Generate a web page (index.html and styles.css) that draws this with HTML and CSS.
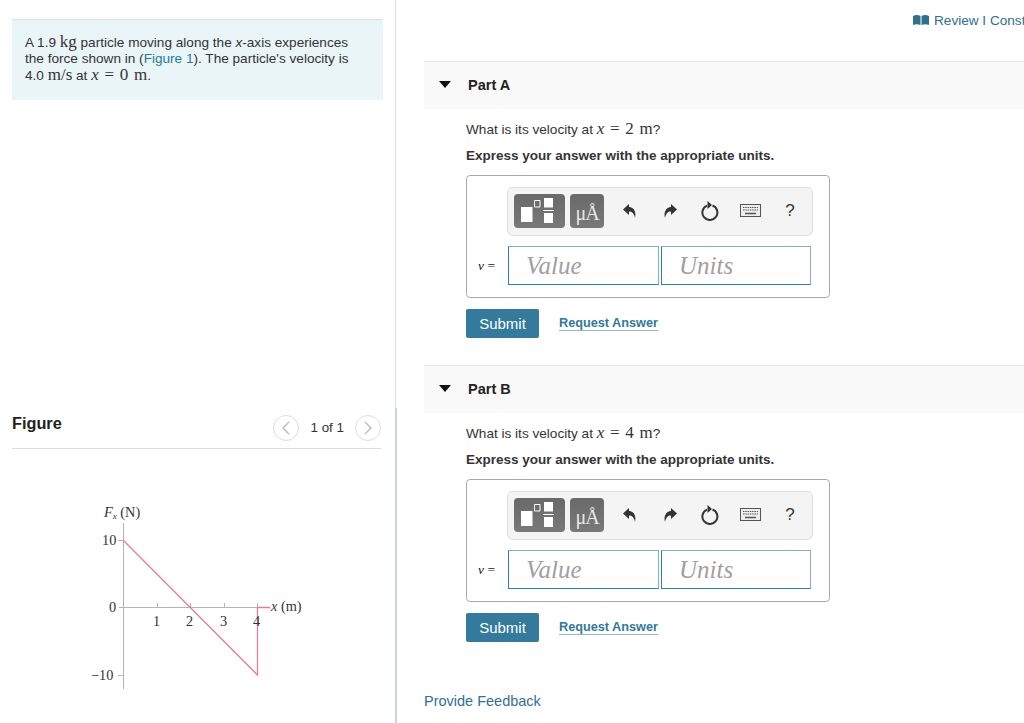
FILE: index.html
```html
<!DOCTYPE html>
<html lang="en">
<head>
<meta charset="utf-8">
<title>Particle problem</title>
<link rel="stylesheet" href="styles.css">
</head>
<body>
<div class="page">
  <aside class="left">
    <div class="problem">A 1.9 <span class="m">kg</span> particle moving along the <i>x</i>-axis experiences the force shown in (<a href="#">Figure 1</a>). The particle's velocity is 4.0 <span class="m">m/s</span> at <span class="m"><i>x</i> = 0 m</span>.</div>
    <section class="figure">
      <div class="figure-head">
        <h2>Figure</h2>
        <div class="pager">
          <span class="circle"><svg width="8" height="14" viewBox="0 0 8 14"><path d="M7 1 1 7l6 6" fill="none" stroke="#bbb" stroke-width="1.4"/></svg></span>
          <span class="count">1 of 1</span>
          <span class="circle"><svg width="8" height="14" viewBox="0 0 8 14"><path d="M1 1l6 6-6 6" fill="none" stroke="#bbb" stroke-width="1.4"/></svg></span>
        </div>
      </div>
      <svg class="graph" width="369" height="240" viewBox="12 449 369 240">
        <g stroke="#b4b4b4" stroke-width="1" fill="none">
          <path d="M123.5 523V689"/>
          <path d="M119 607.500H270"/>
          <path d="M118 540.500H123M118 675.500H123M157.500 603V607M190.500 603V607M224.500 603V607M257.500 603V607"/>
        </g>
        <path d="M123 540 257.500 675V607.500H270" fill="none" stroke="#ea7d99" stroke-width="1.300"/>
        <g class="gt">
          <text x="104" y="517"><tspan font-style="italic">F</tspan><tspan font-style="italic" font-size="9" dy="2">x</tspan><tspan dy="-2"> (N)</tspan></text>
          <text x="102" y="545">10</text>
          <text x="109" y="612">0</text>
          <text x="91" y="680">−10</text>
          <text x="153" y="626">1</text>
          <text x="186" y="626">2</text>
          <text x="220" y="626">3</text>
          <text x="253" y="626">4</text>
          <text x="271" y="611"><tspan font-style="italic">x</tspan> (m)</text>
        </g>
      </svg>
    </section>
  </aside>
  <main class="right">
    <div class="top-link">
      <svg width="16" height="10" viewBox="0 0 16 10"><path d="M0 1q4-2 7.500 0v9Q4 8.500 0 10zM8.500 1q3.500-2 7.500 0v9q-4-1.500-7.500 0z" fill="#2f6f8f"/></svg>
      <a href="#">Review I Constants</a>
    </div>
    <section class="part">
      <div class="part-head"><svg width="12" height="7" viewBox="0 0 12 7"><path d="M0 0h12L6 7z" fill="#111"/></svg><b>Part A</b></div>
      <div class="part-body">
        <p class="q">What is its velocity at <span class="m"><i>x</i> = 2 m</span>?</p>
        <p class="e">Express your answer with the appropriate units.</p>
        <div class="answer">
          <div class="toolbar">
            <span class="tbtn wide">
              <svg width="34" height="26" viewBox="0 0 34 26"><path d="M0 9h11.500v15H0zM23 0h9v9.500h-9zM23 15h9v10h-9z" fill="#fff"/><path d="M13.500 2.500h5.500v6.500h-5.500z" fill="none" stroke="#fff"/><path d="M22 12.500h11" stroke="#fff"/></svg>
            </span>
            <span class="tbtn narrow">μÅ</span>
            <span class="ic first"><svg width="16" height="16" viewBox="0 0 16 16"><path d="M7 1 1 6.500 7 12V8.500c3 0 5 1.500 6 6.500 1.500-6-1-10.500-6-11z" fill="#333"/></svg></span>
            <span class="ic"><svg width="16" height="16" viewBox="0 0 16 16"><path d="M9 1l6 5.500L9 12V8.500c-3 0-5 1.500-6 6.500-1.500-6 1-10.500 6-11z" fill="#333"/></svg></span>
            <span class="ic"><svg width="18" height="20" viewBox="0 0 18 20"><path d="M6 4.600a7.500 7.500 0 1 0 5.500-.1" fill="none" stroke="#333" stroke-width="2"/><path d="M6.500 0v8L11 4z" fill="#333"/></svg></span>
            <span class="ic"><svg width="21" height="13" viewBox="0 0 21 13"><rect x=".5" y=".5" width="20" height="12" fill="#eee" stroke="#555"/><path d="M3 3.500h15M3 6h15" stroke="#555" stroke-dasharray="1.500 .8"/><path d="M5 9.500h11" stroke="#555" stroke-width="1.500"/></svg></span>
            <span class="ic help">?</span>
          </div>
          <div class="inputs">
            <span class="lab"><i>v</i> =</span>
            <span class="inp">Value</span>
            <span class="inp">Units</span>
          </div>
        </div>
        <div class="actions"><button>Submit</button><a href="#">Request Answer</a></div>
      </div>
    </section>
    <section class="part">
      <div class="part-head"><svg width="12" height="7" viewBox="0 0 12 7"><path d="M0 0h12L6 7z" fill="#111"/></svg><b>Part B</b></div>
      <div class="part-body">
        <p class="q">What is its velocity at <span class="m"><i>x</i> = 4 m</span>?</p>
        <p class="e">Express your answer with the appropriate units.</p>
        <div class="answer">
          <div class="toolbar">
            <span class="tbtn wide">
              <svg width="34" height="26" viewBox="0 0 34 26"><path d="M0 9h11.500v15H0zM23 0h9v9.500h-9zM23 15h9v10h-9z" fill="#fff"/><path d="M13.500 2.500h5.500v6.500h-5.500z" fill="none" stroke="#fff"/><path d="M22 12.500h11" stroke="#fff"/></svg>
            </span>
            <span class="tbtn narrow">μÅ</span>
            <span class="ic first"><svg width="16" height="16" viewBox="0 0 16 16"><path d="M7 1 1 6.500 7 12V8.500c3 0 5 1.500 6 6.500 1.500-6-1-10.500-6-11z" fill="#333"/></svg></span>
            <span class="ic"><svg width="16" height="16" viewBox="0 0 16 16"><path d="M9 1l6 5.500L9 12V8.500c-3 0-5 1.500-6 6.500-1.500-6 1-10.500 6-11z" fill="#333"/></svg></span>
            <span class="ic"><svg width="18" height="20" viewBox="0 0 18 20"><path d="M6 4.600a7.500 7.500 0 1 0 5.500-.1" fill="none" stroke="#333" stroke-width="2"/><path d="M6.500 0v8L11 4z" fill="#333"/></svg></span>
            <span class="ic"><svg width="21" height="13" viewBox="0 0 21 13"><rect x=".5" y=".5" width="20" height="12" fill="#eee" stroke="#555"/><path d="M3 3.500h15M3 6h15" stroke="#555" stroke-dasharray="1.500 .8"/><path d="M5 9.500h11" stroke="#555" stroke-width="1.500"/></svg></span>
            <span class="ic help">?</span>
          </div>
          <div class="inputs">
            <span class="lab"><i>v</i> =</span>
            <span class="inp">Value</span>
            <span class="inp">Units</span>
          </div>
        </div>
        <div class="actions"><button>Submit</button><a href="#">Request Answer</a></div>
      </div>
    </section>
    <a class="feedback" href="#">Provide Feedback</a>
  </main>
</div>
</body>
</html>
```

FILE: styles.css
```css
* { box-sizing: border-box; }
html, body { margin: 0; height: 723px; overflow: hidden; background: #fff; }
body { font: 13.6px/16px "Liberation Sans", Arial, sans-serif; color: #333; }
a { color: #1f7a9e; text-decoration: none; }
.page { display: flex; width: 1024px; height: 723px; overflow: hidden; }
.left { flex: 0 0 396px; min-width: 0; height: 723px; display: flex; flex-direction: column; border-right: 1px solid #d3e0e9; padding: 19px 14px 0 12px; }
.m { font-family: "Liberation Serif", serif; font-size: 17px; word-spacing: 1.500px; }
.problem { height: 81px; background: #eaf5f8; border-top: 1px solid #d9e3e8; padding: 14px 13px 0; margin-right: -2px; flex: none; }
.figure { margin: 308px -16px 0 0; padding-right: 14px; border-right: 2px solid #c5d3e3; flex: 1; }
.figure-head { display: flex; align-items: center; justify-content: space-between; height: 41px; border-bottom: 1px solid #ddd; }
.figure-head h2 { margin: 0 0 10px; font-size: 16.300px; line-height: 20px; font-weight: bold; color: #222; }
.pager { display: flex; align-items: center; gap: 11px; }
.circle { width: 26px; height: 26px; border: 1px solid #ddd; border-radius: 50%; display: flex; align-items: center; justify-content: center; }
.count { color: #333; font-size: 13.400px; }
.graph { display: block; }
.gt { font: 14.300px "Liberation Serif", serif; fill: #333; }
.right { flex: 0 0 628px; padding-left: 28px; }
.top-link { height: 61px; padding: 13px 0 0 489px; display: flex; align-items: flex-start; gap: 5px; white-space: nowrap; }
.top-link svg { margin-top: 2px; }
.top-link a { color: #2f6f8f; }
.part-head { height: 48px; background: #f9f9f9; border-top: 1px solid #e6e6e6; display: flex; align-items: center; padding: 0 0 2px 15px; }
.part-head b { margin-left: 17px; color: #222; font-size: 14.500px; }
.part-body { height: 256px; padding: 12px 0 0 42px; }
.q { margin: 0; height: 17px; }
.e { margin: 10px 0 11px; font-weight: bold; font-size: 13.500px; }
.answer { width: 364px; height: 123px; border: 1px solid #aaa; border-radius: 4px; padding: 11px 16px 0 40px; }
.toolbar { height: 49px; background: #f4f4f4; border: 1px solid #ddd; border-radius: 6px; display: flex; align-items: center; padding: 0 0 2px 6px; }
.tbtn { height: 34px; border-radius: 4px; background: linear-gradient(#696969, #797979); display: flex; align-items: center; justify-content: center; color: #fff; }
.wide { width: 51px; }
.wide svg { margin-right: 3px; }
.narrow { width: 34px; margin-left: 5px; padding-top: 5px; font: 20px "Liberation Serif", serif; color: #e8e8e8; letter-spacing: -1px; }
.ic { flex: 0 0 40px; display: flex; align-items: center; justify-content: center; }
.first { margin-left: 6px; }
.help { font-size: 17px; color: #333; }
.inputs { display: flex; align-items: center; height: 39px; margin: 10px 0 0 -29px; }
.lab { flex: none; width: 30px; font: 13.500px "Liberation Serif", serif; color: #222; white-space: nowrap; }
.inp { flex: none; width: 151px; height: 39px; border: 1px solid #2f7fa3; border-top-color: #7fb0c8; border-right-color: #7fb0c8; margin-right: 2px; padding-left: 17px; font: italic 25px/37px "Liberation Serif", serif; color: #a0a0a0; }
.inp:last-child { width: 150px; margin-right: 0; padding-left: 17px; }
.actions { display: flex; align-items: center; margin-top: 11px; }
.actions button { width: 73px; height: 29px; border: 0; border-radius: 2px; background: #337a9c; color: #fff; font: 15px "Liberation Sans", Arial, sans-serif; padding: 0; }
.actions a { margin-left: 20px; font-size: 12.700px; font-weight: bold; color: #2f7a9c; border-bottom: 1px solid #8fb9cc; line-height: 14px; }
.feedback { display: block; margin-top: 24px; color: #2f7197; font-size: 14.500px; }
```
